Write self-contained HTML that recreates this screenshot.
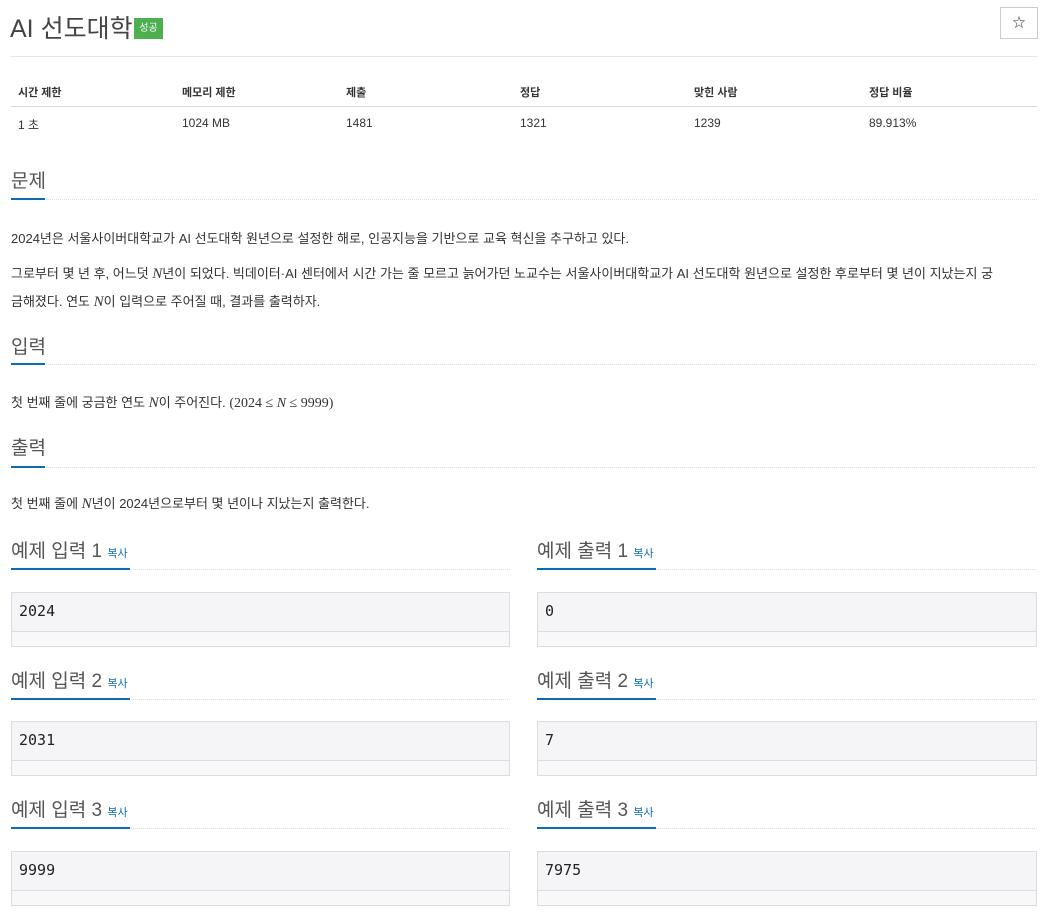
<!DOCTYPE html>
<html><head><meta charset="utf-8"><style>
body{margin:0;background:#fff;font-family:"Liberation Sans","Noto Sans CJK KR",sans-serif;color:#333;width:1053px;height:919px;overflow:hidden;position:relative}
.a{position:absolute;white-space:nowrap}
.t{font-size:13px;color:#333}
.h{font-size:19px;color:#555}
.ul{position:absolute;height:0;border-top:1px dotted #d8dde6}
.bl{position:absolute;height:2px;background:#0b6bb5}
.box{position:absolute;width:497px;height:53px;border:1px solid #dcdde3;background:#f5f5f7}
.box .in{position:absolute;left:0;right:0;top:38px;bottom:0;border-top:1px solid #dcdde3;background:#f8f8f9}
.box span{position:absolute;left:7px;top:9px;font-family:"DejaVu Sans Mono","Liberation Mono",monospace;font-size:15px;color:#222}
.cp{font-size:11px;color:#0b6bb5}
.m{font-family:"Liberation Serif",serif;font-style:italic;font-size:15px}
</style></head><body>
<div class="a" style="left:10px;top:9px;font-size:25px;color:#444">AI 선도대학</div>
<div class="a" style="left:134px;top:18px;width:29px;height:21px;background:#4caf50;color:#fff;font-size:10px;text-align:center;line-height:21px">성공</div>
<div class="a" style="left:1000px;top:7px;width:36px;height:30px;border:1px solid #ccc;text-align:center;line-height:29px;font-size:13px;color:#333">☆</div>
<div class="a" style="left:11px;top:56px;width:1026px;height:1px;background:#e6e6e6"></div>
<div class="a" style="left:11px;top:106px;width:1026px;height:1px;background:#d8d8d8"></div>
<div class="a t" style="left:18px;top:84px;font-size:11px;font-weight:bold">시간 제한</div>
<div class="a t" style="left:182px;top:84px;font-size:11px;font-weight:bold">메모리 제한</div>
<div class="a t" style="left:346px;top:84px;font-size:11px;font-weight:bold">제출</div>
<div class="a t" style="left:520px;top:84px;font-size:11px;font-weight:bold">정답</div>
<div class="a t" style="left:694px;top:84px;font-size:11px;font-weight:bold">맞힌 사람</div>
<div class="a t" style="left:869px;top:84px;font-size:11px;font-weight:bold">정답 비율</div>
<div class="a t" style="left:18px;top:116px;font-size:12px">1 초</div>
<div class="a t" style="left:182px;top:116px;font-size:12px">1024 MB</div>
<div class="a t" style="left:346px;top:116px;font-size:12px">1481</div>
<div class="a t" style="left:520px;top:116px;font-size:12px">1321</div>
<div class="a t" style="left:694px;top:116px;font-size:12px">1239</div>
<div class="a t" style="left:869px;top:116px;font-size:12px">89.913%</div>

<div class="a h" style="left:11px;top:166px">문제</div>
<div class="ul" style="left:11px;top:199px;width:1026px"></div><div class="bl" style="left:11px;top:198px;width:34px"></div>
<div class="a t" style="left:11px;top:228px">2024년은 서울사이버대학교가 AI 선도대학 원년으로 설정한 해로, 인공지능을 기반으로 교육 혁신을 추구하고 있다.</div>
<div class="a t" style="left:11px;top:263px">그로부터 몇 년 후, 어느덧 <span class="m">N</span>년이 되었다. 빅데이터·AI 센터에서 시간 가는 줄 모르고 늙어가던 노교수는 서울사이버대학교가 AI 선도대학 원년으로 설정한 후로부터 몇 년이 지났는지 궁</div>
<div class="a t" style="left:11px;top:291px">금해졌다. 연도 <span class="m">N</span>이 입력으로 주어질 때, 결과를 출력하자.</div>

<div class="a h" style="left:11px;top:332px">입력</div>
<div class="ul" style="left:11px;top:364px;width:1026px"></div><div class="bl" style="left:11px;top:363px;width:34px"></div>
<div class="a t" style="left:11px;top:392px">첫 번째 줄에 궁금한 연도 <span class="m">N</span>이 주어진다. <span style="font-family:'Liberation Serif',serif;font-size:14px">(2024 ≤ <i>N</i> ≤ 9999)</span></div>

<div class="a h" style="left:11px;top:433px">출력</div>
<div class="ul" style="left:11px;top:467px;width:1026px"></div><div class="bl" style="left:11px;top:466px;width:34px"></div>
<div class="a t" style="left:11px;top:493px">첫 번째 줄에 <span class="m">N</span>년이 2024년으로부터 몇 년이나 지났는지 출력한다.</div>

<div class="a h" style="left:11px;top:536px">예제 입력 1 <span class="cp">복사</span></div>
<div class="ul" style="left:11px;top:569px;width:499px"></div><div class="bl" style="left:11px;top:568px;width:119px"></div>
<div class="box" style="left:11px;top:592px"><span>2024</span><div class="in"></div></div>
<div class="a h" style="left:537px;top:536px">예제 출력 1 <span class="cp">복사</span></div>
<div class="ul" style="left:537px;top:569px;width:500px"></div><div class="bl" style="left:537px;top:568px;width:119px"></div>
<div class="box" style="left:537px;top:592px;width:498px"><span>0</span><div class="in"></div></div>

<div class="a h" style="left:11px;top:666px">예제 입력 2 <span class="cp">복사</span></div>
<div class="ul" style="left:11px;top:699px;width:499px"></div><div class="bl" style="left:11px;top:698px;width:119px"></div>
<div class="box" style="left:11px;top:721px"><span>2031</span><div class="in"></div></div>
<div class="a h" style="left:537px;top:666px">예제 출력 2 <span class="cp">복사</span></div>
<div class="ul" style="left:537px;top:699px;width:500px"></div><div class="bl" style="left:537px;top:698px;width:119px"></div>
<div class="box" style="left:537px;top:721px;width:498px"><span>7</span><div class="in"></div></div>

<div class="a h" style="left:11px;top:795px">예제 입력 3 <span class="cp">복사</span></div>
<div class="ul" style="left:11px;top:828px;width:499px"></div><div class="bl" style="left:11px;top:827px;width:119px"></div>
<div class="box" style="left:11px;top:851px"><span>9999</span><div class="in"></div></div>
<div class="a h" style="left:537px;top:795px">예제 출력 3 <span class="cp">복사</span></div>
<div class="ul" style="left:537px;top:828px;width:500px"></div><div class="bl" style="left:537px;top:827px;width:119px"></div>
<div class="box" style="left:537px;top:851px;width:498px"><span>7975</span><div class="in"></div></div>
</body></html>
